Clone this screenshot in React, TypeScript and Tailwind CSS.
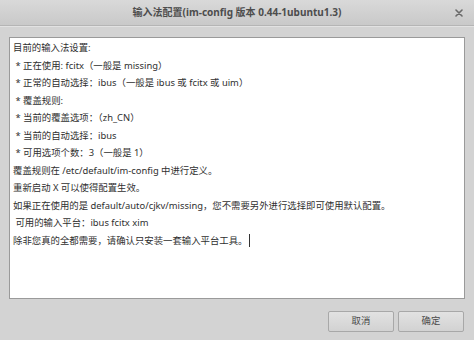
import React from 'react';

const LINES = [
  '目前的输入法设置:',
  ' * 正在使用: fcitx（一般是 missing）',
  ' * 正常的自动选择：ibus（一般是 ibus 或 fcitx 或 uim）',
  ' * 覆盖规则:',
  ' * 当前的覆盖选项：（zh_CN）',
  ' * 当前的自动选择：ibus',
  ' * 可用选项个数：3（一般是 1）',
  '覆盖规则在 /etc/default/im-config 中进行定义。',
  '重新启动 X 可以使得配置生效。',
  '如果正在使用的是 default/auto/cjkv/missing，您不需要另外进行选择即可使用默认配置。',
  ' 可用的输入平台：ibus fcitx xim',
];

export default function App() {
  return (
    <div
      className="w-[474px] h-[340px] bg-[#d3d3d3] flex flex-col overflow-hidden"
      style={{ fontFamily: '"Noto Sans", "Noto Sans CJK SC", sans-serif' }}
    >
      {/* title bar */}
      <div className="h-[26px] shrink-0 bg-gradient-to-b from-[#d9d9d9] to-[#c9c9c9] border-b border-[#b5b5b5] flex items-center relative">
        <div className="flex-1 text-center text-[10px] font-bold text-[#4d4d4d]">
          输入法配置(im-config 版本 0.44-1ubuntu1.3)
        </div>
        <svg className="absolute right-[11px] top-[9px]" width="8" height="8" viewBox="0 0 8 8">
          <path d="M1 1 L7 7 M7 1 L1 7" stroke="#6a6a6a" strokeWidth="1.6" strokeLinecap="round" />
        </svg>
      </div>
      <div className="h-px bg-[#e2e2e2]" />

      {/* text area */}
      <div className="flex-1 flex flex-col px-[9px] pt-[10px]">
        <div className="h-[262px] bg-white border border-[#9a9a9a] pl-[3px] pt-[1px] text-[9.4px] leading-[17.5px] text-[#2f2f2f] whitespace-pre">
          {LINES.map((l, i) => (
            <div key={i}>{l}</div>
          ))}
          <div className="flex items-center">
            <span>除非您真的全都需要，请确认只安装一套输入平台工具。</span>
            <span className="inline-block w-px h-[13px] bg-[#333] ml-[2px]" />
          </div>
        </div>

        {/* buttons */}
        <div className="flex justify-end gap-[4px] pr-[1px] mt-[12px]">
          <button className="w-[66px] h-[21px] rounded-[2px] border border-[#a8a8a8] bg-gradient-to-b from-[#e2e2e2] to-[#d2d2d2] text-[9.4px] text-[#4a4a4a]">
            取消
          </button>
          <button className="w-[66px] h-[21px] rounded-[2px] border border-[#a8a8a8] bg-gradient-to-b from-[#e2e2e2] to-[#d2d2d2] text-[9.4px] text-[#4a4a4a]">
            确定
          </button>
        </div>
      </div>
    </div>
  );
}
